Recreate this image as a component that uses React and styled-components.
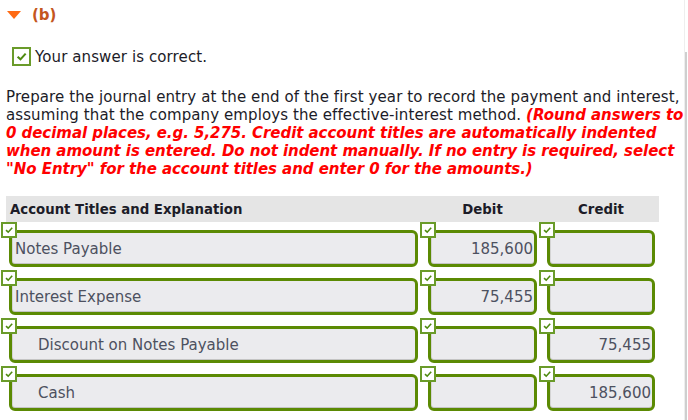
import React from 'react'
import styled, { createGlobalStyle } from 'styled-components'

const GlobalStyle = createGlobalStyle`
  html, body {
    margin: 0;
    padding: 0;
    background: #fff;
  }
  body {
    font-family: "DejaVu Sans", "Liberation Sans", sans-serif;
    color: #1c1c28;
  }
`

const rows = [
  { account: 'Notes Payable', debit: '185,600', credit: '', indent: false },
  { account: 'Interest Expense', debit: '75,455', credit: '', indent: false },
  { account: 'Discount on Notes Payable', debit: '', credit: '75,455', indent: true },
  { account: 'Cash', debit: '', credit: '185,600', indent: true },
]

const Check = ({ size = 16 }) => (
  <CheckBox $size={size}>
    <svg width={size - 6} height={size - 6} viewBox="0 0 10 10">
      <polyline points="2,5.2 4.2,7.2 8.2,2.8" fill="none" stroke="#4f8a10" strokeWidth="1.6" />
    </svg>
  </CheckBox>
)

const App = () => {
  return (
    <Page>
      <GlobalStyle />
      <Main>
        <PartHeader>
          <Triangle />
          <PartLabel>(b)</PartLabel>
        </PartHeader>
        <Correct>
          <Check size={19} />
          <span>Your answer is correct.</span>
        </Correct>
        <Prompt>
          <Line>Prepare the journal entry at the end of the first year to record the payment and interest,</Line>
          <Line>
            assuming that the company employs the effective-interest method. <Hint>(Round answers to</Hint>
          </Line>
          <Line><Hint>0 decimal places, e.g. 5,275. Credit account titles are automatically indented</Hint></Line>
          <Line><Hint>when amount is entered. Do not indent manually. If no entry is required, select</Hint></Line>
          <Line><Hint>"No Entry" for the account titles and enter 0 for the amounts.)</Hint></Line>
        </Prompt>
        <Table>
          <HeadRow>
            <HeadCell>Account Titles and Explanation</HeadCell>
            <HeadCell $center>Debit</HeadCell>
            <HeadCell $center>Credit</HeadCell>
          </HeadRow>
          {rows.map((r) => (
            <EntryRow key={r.account}>
              <Field $indent={r.indent}>
                <Badge><Check /></Badge>
                {r.account}
              </Field>
              <Field $num>
                <Badge><Check /></Badge>
                {r.debit}
              </Field>
              <Field $num>
                <Badge><Check /></Badge>
                {r.credit}
              </Field>
            </EntryRow>
          ))}
        </Table>
      </Main>
      <Rail>
        <RailBar />
      </Rail>
    </Page>
  )
}

export default App

const Page = styled.div`
  display: flex;
  width: 688px;
  height: 420px;
  overflow: hidden;
`
const Main = styled.div`
  flex: 1;
  min-width: 0;
  padding: 6px 0 0 6px;
`
const PartHeader = styled.div`
  display: flex;
  align-items: center;
  gap: 11px;
  height: 18px;
  padding-left: 1px;
`
const Triangle = styled.div`
  width: 0;
  height: 0;
  border-left: 7px solid transparent;
  border-right: 7px solid transparent;
  border-top: 8px solid #ff6a13;
`
const PartLabel = styled.div`
  font-weight: 700;
  font-size: 15px;
  color: #c4561e;
`
const Correct = styled.div`
  display: flex;
  align-items: center;
  gap: 4px;
  margin: 23px 0 0 6px;
  font-size: 15px;
  letter-spacing: 0.1px;
`
const CheckBox = styled.div`
  box-sizing: border-box;
  width: ${(p) => p.$size}px;
  height: ${(p) => p.$size}px;
  border: 2px solid #6a9b2a;
  background: #fff;
  display: flex;
  align-items: center;
  justify-content: center;
`
const Prompt = styled.div`
  margin-top: 22px;
  font-size: 15px;
  line-height: 18px;
  letter-spacing: 0.1px;
`
const Line = styled.div`
  white-space: nowrap;
`
const Hint = styled.span`
  color: #ff0000;
  font-weight: 700;
  font-style: italic;
  letter-spacing: -0.05px;
`
const Table = styled.div`
  width: 653px;
  margin-top: 18px;
`
const HeadRow = styled.div`
  display: grid;
  grid-template-columns: 412px 109px 108px;
  column-gap: 10px;
  height: 26px;
  align-items: center;
  background: #e5e5e5;
  font-weight: 700;
  font-size: 13.3px;
`
const HeadCell = styled.div`
  padding-left: ${(p) => (p.$center ? 0 : 4)}px;
  text-align: ${(p) => (p.$center ? 'center' : 'left')};
`
const EntryRow = styled.div`
  display: grid;
  grid-template-columns: 409px 109px 108px;
  column-gap: 10px;
  padding-left: 3px;
  margin-top: 8px;
  & + & {
    margin-top: 11px;
  }
`
const Field = styled.div`
  position: relative;
  box-sizing: border-box;
  height: 37px;
  border: 3px solid #5b8a03;
  border-radius: 6px;
  background: #ebebee;
  box-shadow: inset 0 -1px 0 #c4c4c4, inset 1px 0 0 #d4d4d4;
  display: flex;
  align-items: center;
  justify-content: ${(p) => (p.$num ? 'flex-end' : 'flex-start')};
  padding: ${(p) => (p.$num ? '0 1px 0 0' : p.$indent ? '0 0 0 26px' : '0 0 0 3px')};
  font-size: 15px;
  color: #4d5160;
`
const Badge = styled.div`
  position: absolute;
  left: -11px;
  top: -11px;
`
const Rail = styled.div`
  width: 3px;
  border-left: 1px solid #eeeeee;
  display: flex;
  flex-direction: column;
`
const RailBar = styled.div`
  margin-top: 52px;
  flex: 1;
  width: 2px;
  background: #cfcfcf;
`
